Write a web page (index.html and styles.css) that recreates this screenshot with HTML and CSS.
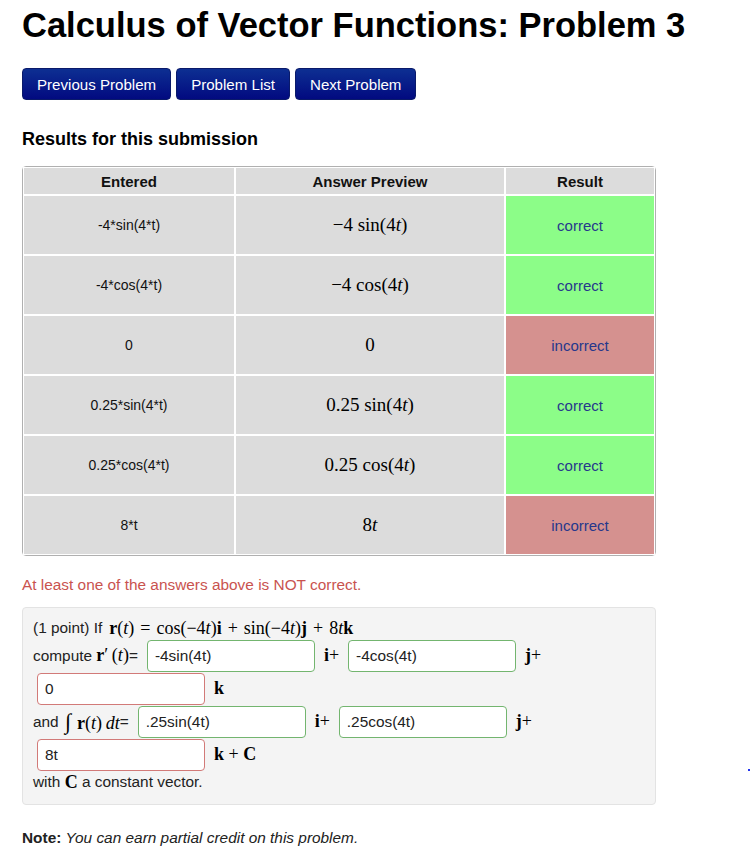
FILE: index.html
```html
<!DOCTYPE html>
<html>
<head>
<meta charset="utf-8">
<link rel="stylesheet" href="styles.css">
</head>
<body>
<div class="page">
  <h1 class="title">Calculus of Vector Functions: Problem 3</h1>
  <div class="nav">
    <a class="btn">Previous Problem</a>
    <a class="btn">Problem List</a>
    <a class="btn">Next Problem</a>
  </div>
  <h2 class="subhead">Results for this submission</h2>
  <table class="results">
    <thead>
      <tr><th class="c1">Entered</th><th class="c2">Answer Preview</th><th class="c3">Result</th></tr>
    </thead>
    <tbody>
      <tr><td>-4*sin(4*t)</td><td class="math">&minus;4 sin(4<i>t</i>)</td><td class="ok">correct</td></tr>
      <tr><td>-4*cos(4*t)</td><td class="math">&minus;4 cos(4<i>t</i>)</td><td class="ok">correct</td></tr>
      <tr><td>0</td><td class="math">0</td><td class="bad">incorrect</td></tr>
      <tr><td>0.25*sin(4*t)</td><td class="math">0.25 sin(4<i>t</i>)</td><td class="ok">correct</td></tr>
      <tr><td>0.25*cos(4*t)</td><td class="math">0.25 cos(4<i>t</i>)</td><td class="ok">correct</td></tr>
      <tr><td>8*t</td><td class="math">8<i>t</i></td><td class="bad">incorrect</td></tr>
    </tbody>
  </table>
  <p class="warn">At least one of the answers above is NOT correct.</p>
  <div class="problem">
    <div class="line text-line">(1 point) If<span class="m lead"><b>r</b>(<i>t</i>)<span class="op">=</span>cos(&minus;4<i>t</i>)<b>i</b><span class="op">+</span>sin(&minus;4<i>t</i>)<b>j</b><span class="op">+</span>8<i>t</i><b>k</b></span></div>
    <div class="line">compute&nbsp;<span class="m"><b>r</b>&prime;&thinsp;(<i>t</i>)</span><span class="eq">=</span><input class="ans good" value="-4sin(4t)"><span class="m unit"><b>i</b>+</span><input class="ans good" value="-4cos(4t)"><span class="m unit"><b>j</b>+</span></div>
    <div class="line"><input class="ans wrong" value="0"><span class="m unit"><b>k</b></span></div>
    <div class="line">and&nbsp;<span class="m"><span class="int">&int;</span><b>r</b>(<i>t</i>)&thinsp;<i>dt</i></span><span class="eq">=</span><input class="ans good" value=".25sin(4t)"><span class="m unit"><b>i</b>+</span><input class="ans good" value=".25cos(4t)"><span class="m unit"><b>j</b>+</span></div>
    <div class="line"><input class="ans wrong" value="8t"><span class="m unit"><b>k</b> + <b>C</b></span></div>
    <div class="line text-line">with&nbsp;<span class="m"><b>C</b></span>&nbsp;a constant vector.</div>
  </div>
  <p class="note"><b>Note:</b> <i>You can earn partial credit on this problem.</i></p>
</div>
<span class="speck"></span>
</body>
</html>
```
FILE: styles.css
```css
html, body { margin: 0; padding: 0; background: #fff; }
body {
  font-family: "Liberation Sans", Arial, sans-serif;
  color: #222;
  font-size: 15.4px;
  position: relative;
  min-height: 858px;
}
.page { padding: 0 22px; }
.title {
  margin: 0;
  padding-top: 5px;
  font-size: 34.5px;
  line-height: 40px;
  font-weight: bold;
  color: #000;
}
.nav {
  margin-top: 23px;
  display: flex;
  gap: 5px;
}
.btn {
  display: inline-block;
  height: 32px;
  line-height: 31px;
  padding: 0 14px;
  color: #fff;
  font-size: 15.1px;
  border-radius: 4px;
  background: linear-gradient(to bottom, #0d2f92, #020a80);
  border: 1px solid #0a1a6a;
  box-sizing: border-box;
}
.subhead {
  margin: 28px 0 0;
  font-size: 18px;
  line-height: 22px;
  font-weight: bold;
  color: #000;
}
.results {
  margin-top: 16px;
  border-collapse: separate;
  border-spacing: 0;
  border: 1px solid #b0b0b0;
  border-radius: 4px;
  width: 634px;
  table-layout: fixed;
}
.results th, .results td {
  background: #dcdcdc;
  border: 1px solid #fff;
  text-align: center;
  padding: 0;
  font-size: 14px;
  color: #111;
}
.results th { height: 26px; font-weight: bold; font-size: 15px; }
.results td { height: 58px; }
.c1 { width: 210px; }
.c2 { width: 268px; }
.results td.math {
  font-family: "Liberation Serif", "Times New Roman", serif;
  font-size: 19px;
  color: #000;
}
.results td.ok { background: #8cfd88; color: #26388c; font-size: 15px; }
.results td.bad { background: #d5918f; color: #26388c; font-size: 15px; }
.warn {
  margin: 19px 0 0;
  color: #c9534f;
  font-size: 15.4px;
  line-height: 20px;
}
.problem {
  margin-top: 12px;
  width: 634px;
  box-sizing: border-box;
  background: #f4f4f4;
  border: 1px solid #e3e3e3;
  border-radius: 4px;
  padding: 9px 10px 11px 10px;
}
.line {
  display: flex;
  align-items: center;
  height: 33px;
  white-space: nowrap;
}
.text-line { height: 22px; }
.m {
  font-family: "Liberation Serif", "Times New Roman", serif;
  font-size: 18px;
  color: #000;
}
.lead { margin-left: 7px; }
.op { margin: 0 6px; }
.int { font-style: italic; font-size: 22px; margin: 0 6px 0 2px; }
.eq { margin-right: 5px; }
.unit { margin: 0 5px; }
.ans {
  width: 168px;
  height: 32px;
  box-sizing: border-box;
  border-radius: 4px;
  background: #fff;
  padding: 0 7px;
  font-family: "Liberation Sans", Arial, sans-serif;
  font-size: 15.4px;
  color: #222;
  margin: 0 4px;
  outline: none;
}
.good { border: 1px solid #73b56f; }
.wrong { border: 1px solid #d27a78; }
.note {
  margin: 23px 0 0;
  font-size: 15.4px;
  line-height: 20px;
}
.speck {
  position: absolute;
  left: 748px;
  top: 769px;
  width: 2px;
  height: 2px;
  background: #2233ee;
}
```
